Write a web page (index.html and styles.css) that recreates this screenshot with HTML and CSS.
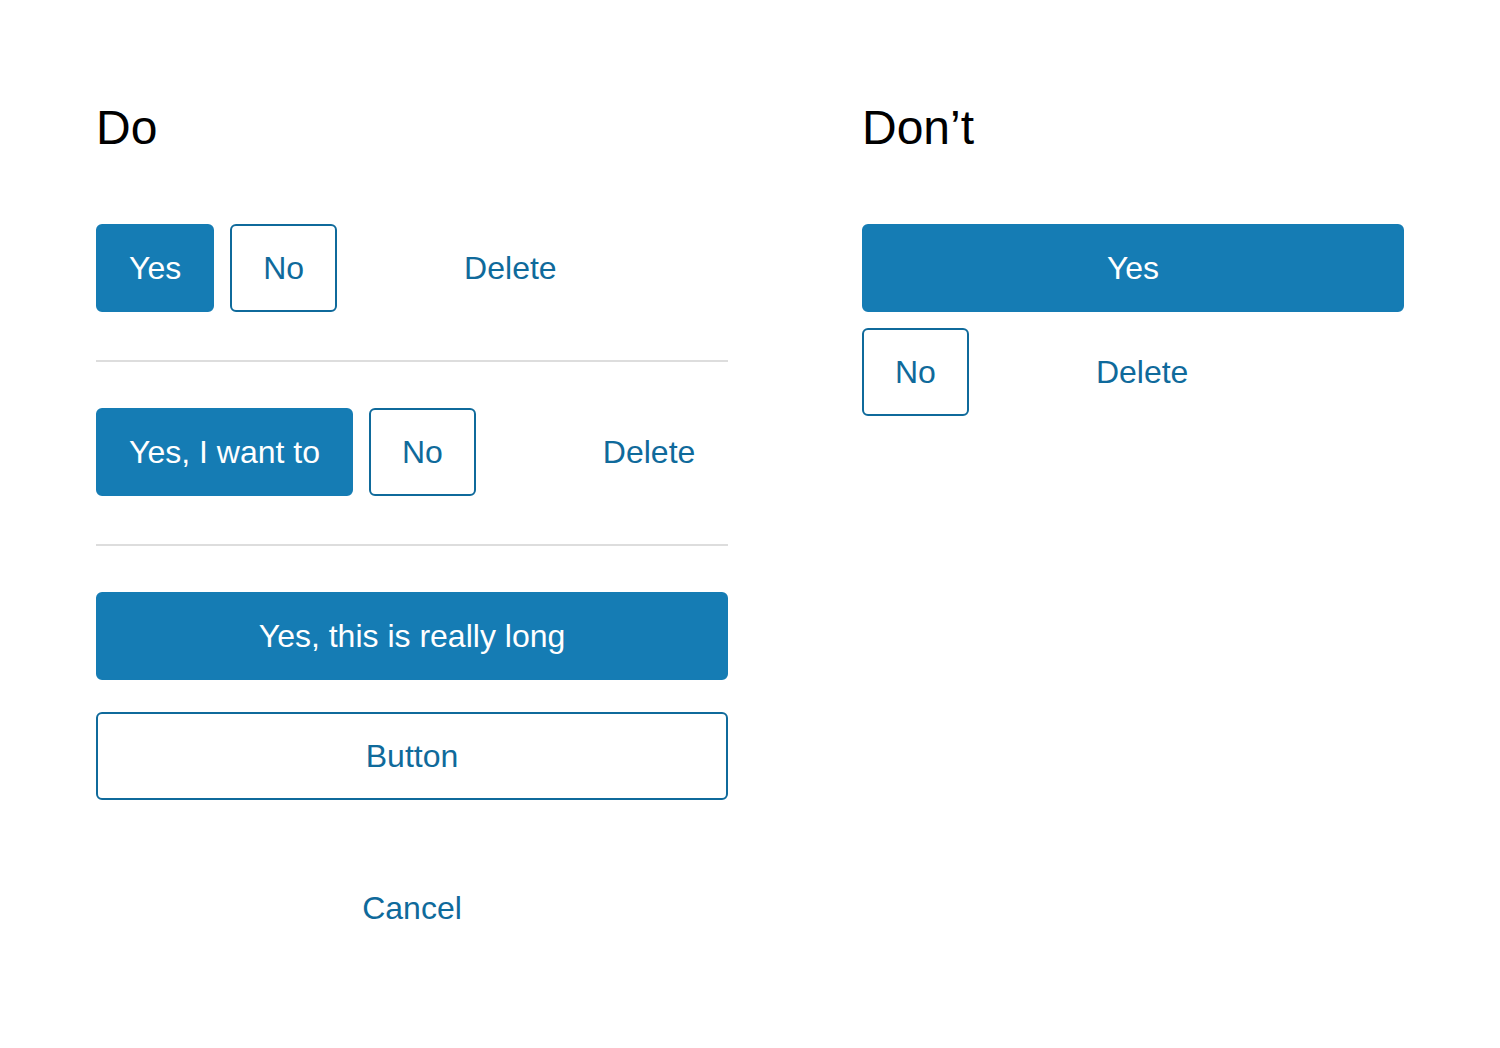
FILE: index.html
```html
<!DOCTYPE html>
<html lang="en">
<head>
<meta charset="utf-8">
<title>Button layout guidelines</title>
<link rel="stylesheet" href="styles.css">
</head>
<body>
<main class="page">
  <section class="column column-do">
    <h2 class="heading">Do</h2>
    <div class="row">
      <button class="btn btn-primary">Yes</button>
      <button class="btn btn-outline">No</button>
      <button class="btn btn-text btn-push">Delete</button>
    </div>
    <hr class="divider">
    <div class="row">
      <button class="btn btn-primary">Yes, I want to</button>
      <button class="btn btn-outline">No</button>
      <button class="btn btn-text btn-push">Delete</button>
    </div>
    <hr class="divider">
    <div class="stack stack-wide">
      <button class="btn btn-primary btn-block">Yes, this is really long</button>
      <button class="btn btn-outline btn-block">Button</button>
      <button class="btn btn-text btn-block btn-spaced">Cancel</button>
    </div>
  </section>
  <section class="column column-dont">
    <h2 class="heading">Don’t</h2>
    <div class="stack">
      <button class="btn btn-primary btn-block">Yes</button>
      <div class="row">
        <button class="btn btn-outline">No</button>
        <button class="btn btn-text btn-push">Delete</button>
      </div>
    </div>
  </section>
</main>
</body>
</html>
```
FILE: styles.css
```css
html, body {
  margin: 0;
  padding: 0;
  background: #ffffff;
}

body {
  font-family: "Liberation Sans", Arial, sans-serif;
}

.page {
  display: grid;
  grid-template-columns: 632px 542px;
  column-gap: 134px;
  padding: 100px 96px;
  align-items: start;
}

.heading {
  margin: 0 0 69px;
  font-size: 48px;
  font-weight: 400;
  line-height: 55px;
  color: #000000;
}

.row {
  display: flex;
  gap: 16px;
  align-items: center;
}

.stack {
  display: flex;
  flex-direction: column;
  gap: 16px;
}

.stack-wide {
  gap: 32px;
}

.divider {
  margin: 48px 0 46px;
  border: 0;
  border-top: 2px solid #dddddd;
  height: 0;
}

.btn {
  box-sizing: border-box;
  height: 88px;
  padding: 0 31px;
  border: 2px solid transparent;
  border-radius: 6px;
  font-family: "Liberation Sans", Arial, sans-serif;
  font-size: 32px;
  line-height: 85px;
  background: transparent;
  color: #0f6a9b;
  white-space: nowrap;
  cursor: pointer;
}

.btn-primary {
  background: #157cb4;
  border-color: #157cb4;
  color: #ffffff;
}

.btn-outline {
  background: #ffffff;
  border-color: #0f6a9b;
  color: #0f6a9b;
}

.btn-text {
  color: #0f6a9b;
}

.btn-push {
  margin-left: 78px;
}

.btn-block {
  width: 100%;
}

.btn-spaced {
  margin-top: 32px;
}
```
